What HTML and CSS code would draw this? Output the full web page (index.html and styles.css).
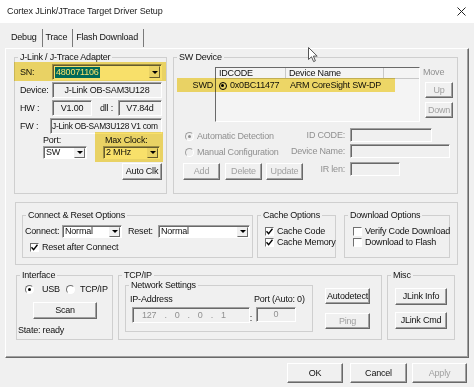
FILE: index.html
```html
<!DOCTYPE html>
<html lang="en">
<head>
    <meta charset="UTF-8">
    <title>Cortex JLink/JTrace Target Driver Setup</title>
    <link rel="stylesheet" href="styles.css">
</head>
<body>
<div class="dlg">
    <div class="titlebar">
        <span class="title">Cortex JLink/JTrace Target Driver Setup</span>
        <svg class="close" width="9" height="9" viewBox="0 0 9 9"><path d="M0.5 0.5L8.5 8.5M8.5 0.5L0.5 8.5" stroke="#222" stroke-width="1"/></svg>
    </div>
    <div class="tabs">
        <span class="tab">Debug</span><span class="tab">Trace</span><span class="tab">Flash Download</span>
    </div>

    <div class="panel">
        <div class="row1">
            <fieldset class="grp adapter">
                <legend>J-Link / J-Trace Adapter</legend>
                <div class="adp">
                    <div class="frow">
                        <span class="lb">SN:</span>
                        <div class="edit white combo grow"><span class="sel">480071106</span><span class="drop"></span></div>
                    </div>
                    <div class="frow">
                        <span class="lb">Device:</span>
                        <div class="edit c grow">J-Link OB-SAM3U128</div>
                    </div>
                    <div class="frow">
                        <span class="lb">HW :</span>
                        <div class="edit c w40">V1.00</div>
                        <span class="dll">dll :</span>
                        <div class="edit c grow">V7.84d</div>
                    </div>
                    <div class="frow">
                        <span class="lb fw">FW :</span>
                        <div class="edit grow fwbox">J-Link OB-SAM3U128 V1 com</div>
                    </div>
                    <div class="clk">
                        <div class="col">
                            <span class="cl">Port:</span>
                            <div class="edit white combo sm w44">SW<span class="drop"></span></div>
                        </div>
                        <div class="col">
                            <span class="cl mc">Max Clock:</span>
                            <div class="edit white combo sm w57">2 MHz<span class="drop"></span></div>
                        </div>
                    </div>
                    <div class="autorow"><button class="btn autoclk">Auto Clk</button></div>
                    <div class="hl hl-sn"></div>
                    <div class="hl hl-clk"></div>
                </div>
            </fieldset>

            <fieldset class="grp swdev">
                <legend>SW Device</legend>
                <div class="swd">
                    <div class="swtop">
                        <div class="swlbl">SWD</div>
                        <div class="list">
                            <div class="lhead"><span class="c1">IDCODE</span><span class="c2">Device Name</span></div>
                            <div class="lrow">
                                <span class="c1"><i class="tgt"></i>0x0BC11477</span>
                                <span class="c2">ARM CoreSight SW-DP</span>
                            </div>
                        </div>
                        <div class="move">
                            <span class="gray">Move</span>
                            <button class="btn dis up">Up</button>
                            <button class="btn dis down">Down</button>
                        </div>
                    </div>
                    <div class="swbot">
                        <div class="swleft">
                            <div class="rrow gray"><i class="radio on dim"></i>Automatic Detection</div>
                            <div class="rrow gray"><i class="radio dim"></i>Manual Configuration</div>
                            <div class="btnrow">
                                <button class="btn dis b37">Add</button>
                                <button class="btn dis b37 ml5">Delete</button>
                                <button class="btn dis b37 ml4">Update</button>
                            </div>
                        </div>
                        <div class="swright">
                            <div class="frow2 h15"><span class="rl gray">ID CODE:</span><div class="edit w82"></div></div>
                            <div class="frow2 mt2"><span class="rl gray">Device Name:</span><div class="edit w100"></div></div>
                            <div class="frow2 mt4"><span class="rl gray">IR len:</span><div class="edit w50"></div></div>
                        </div>
                    </div>
                    <div class="hl hl-swd"></div>
                </div>
            </fieldset>
        </div>

        <div class="bigbox">
            <fieldset class="grp conn">
                <legend>Connect &amp; Reset Options</legend>
                <div class="cro">
                    <div class="crow">
                        <span class="cn">Connect:</span>
                        <div class="edit white combo sm w60">Normal<span class="drop"></span></div>
                        <span class="rs">Reset:</span>
                        <div class="edit white combo sm w92">Normal<span class="drop"></span></div>
                    </div>
                    <div class="chkrow"><i class="chk on"><svg width="7" height="7" viewBox="0 0 7 7"><path d="M0.5 3.3L2.6 5.6L6.5 0.8" fill="none" stroke="#000" stroke-width="1.4"/></svg></i>Reset after Connect</div>
                </div>
            </fieldset>
            <fieldset class="grp cache">
                <legend>Cache Options</legend>
                <div class="chks">
                    <div class="crow2"><i class="chk on"><svg width="7" height="7" viewBox="0 0 7 7"><path d="M0.5 3.3L2.6 5.6L6.5 0.8" fill="none" stroke="#000" stroke-width="1.4"/></svg></i>Cache Code</div>
                    <div class="crow2"><i class="chk on"><svg width="7" height="7" viewBox="0 0 7 7"><path d="M0.5 3.3L2.6 5.6L6.5 0.8" fill="none" stroke="#000" stroke-width="1.4"/></svg></i>Cache Memory</div>
                </div>
            </fieldset>
            <fieldset class="grp dload">
                <legend>Download Options</legend>
                <div class="chks pl8">
                    <div class="crow2"><i class="chk"></i>Verify Code Download</div>
                    <div class="crow2"><i class="chk"></i>Download to Flash</div>
                </div>
            </fieldset>
        </div>

        <div class="row3">
            <fieldset class="grp iface">
                <legend>Interface</legend>
                <div class="irow"><i class="radio on"></i><span class="usb">USB</span><i class="radio ml6"></i><span class="tcp">TCP/IP</span></div>
                <button class="btn scan">Scan</button>
                <div class="state">State: ready</div>
            </fieldset>

            <fieldset class="grp tcpip">
                <legend>TCP/IP</legend>
                <div class="tcp">
                    <fieldset class="grp netset">
                        <legend>Network Settings</legend>
                        <div class="net">
                            <div class="ipcol">
                                <span class="cl">IP-Address</span>
                                <div class="edit ipbox gray"><span>127</span><span>.</span><span>0</span><span>.</span><span>0</span><span>.</span><span>1</span></div>
                            </div>
                            <div class="colon">:</div>
                            <div class="portcol">
                                <span class="cl">Port (Auto: 0)</span>
                                <div class="edit c w40 h15 gray">0</div>
                            </div>
                        </div>
                    </fieldset>
                    <div class="adbtns">
                        <button class="btn w45">Autodetect</button>
                        <button class="btn dis w45 ping">Ping</button>
                    </div>
                </div>
            </fieldset>

            <fieldset class="grp misc">
                <legend>Misc</legend>
                <div class="miscb">
                    <button class="btn w52">JLink Info</button>
                    <button class="btn w52 mt7">JLink Cmd</button>
                </div>
            </fieldset>
        </div>
    </div>

    <div class="footer">
        <button class="btn ok">OK</button>
        <button class="btn cancel">Cancel</button>
        <button class="btn dis apply">Apply</button>
    </div>

    <svg class="cursor" width="11" height="16" viewBox="0 0 11 16"><path d="M0.5 0.5L0.5 12.5L3.5 9.8L5.6 14.6L7.4 13.8L5.4 9.1L9.2 9.1Z" fill="#fff" stroke="#555" stroke-width="1"/></svg>
</div>
</body>
</html>
```

FILE: styles.css
```css
* {
    box-sizing: border-box;
    margin: 0;
    padding: 0;
}
html, body {
    background: #f0f0f0;
}
body {
    width: 474px;
    height: 387px;
    overflow: hidden;
    font: 9px/11px "Liberation Sans", Arial, sans-serif;
    letter-spacing: -0.2px;
    color: #111;
}
.dlg {
    position: relative;
    height: 387px;
}
.titlebar {
    height: 23px;
    background: #fff;
    display: flex;
    align-items: center;
    justify-content: space-between;
    padding: 0 8px 0 7px;
}
.title {
    letter-spacing: -0.1px;
    color: #222;
}
.tabs {
    height: 25px;
    display: flex;
    padding: 6px 0 0 8px;
}
.tab {
    height: 18px;
    line-height: 17px;
    padding: 0 5px 0 3px;
    border-right: 1px solid #7a7a7a;
}
.panel {
    width: 464px;
    height: 310px;
    margin-left: 5px;
    border: 1px solid;
    border-color: #fff #696969 #696969 #fff;
    box-shadow: inset -1px -1px 0 #a0a0a0;
    padding: 3px 0 0 8px;
}

/* group boxes */
.grp {
    border: 1px solid #cfcfcf;
    min-width: 0;
    flex-shrink: 0;
}
legend {
    margin-left: 3px;
    padding: 0 2px;
    line-height: 11px;
}
.gray {
    color: #909090;
}

/* edit boxes, combos, buttons */
.edit {
    height: 16px;
    border: 1px solid;
    border-color: #a0a0a0 #fff #fff #a0a0a0;
    box-shadow: inset 1px 1px 0 #696969;
    background: #f0f0f0;
    display: flex;
    align-items: center;
    padding: 0 2px;
    white-space: nowrap;
    overflow: hidden;
    flex-shrink: 0;
}
.edit.c {
    justify-content: center;
}
.fwbox {
    padding-left: 1px;
    font-size: 8.4px;
    letter-spacing: -0.3px;
}
.white {
    background: #fff;
}
.grow {
    flex: 1;
}
.combo {
    padding: 0 1px 0 2px;
}
.combo.sm {
    height: 13px;
}
.drop {
    margin-left: auto;
    width: 11px;
    height: 12px;
    border: 1px solid;
    border-color: #f0f0f0 #696969 #696969 #f0f0f0;
    background: #f0f0f0;
    display: flex;
    align-items: center;
    justify-content: center;
    flex-shrink: 0;
}
.combo.sm .drop {
    height: 10px;
}
.drop::after {
    content: "";
    border-left: 3px solid transparent;
    border-right: 3px solid transparent;
    border-top: 3px solid #000;
}
.sel {
    background: #0078d7;
    color: #fff;
    padding: 0 1px;
}
.btn {
    font: inherit;
    letter-spacing: inherit;
    color: #111;
    background: #f0f0f0;
    border: 1px solid;
    border-color: #fff #696969 #696969 #fff;
    box-shadow: inset -1px -1px 0 #a0a0a0;
    display: flex;
    align-items: center;
    justify-content: center;
    flex-shrink: 0;
    height: 17px;
}
.btn.dis {
    color: #a0a0a0;
}
.radio {
    display: inline-block;
    width: 9px;
    height: 9px;
    border-radius: 50%;
    border: 1px solid;
    border-color: #707070 #fff #fff #707070;
    background: #fff;
    position: relative;
    flex-shrink: 0;
}
.radio.on::after {
    content: "";
    position: absolute;
    left: 2px;
    top: 2px;
    width: 3px;
    height: 3px;
    border-radius: 50%;
    background: #000;
}
.radio.dim {
    background: #f0f0f0;
    border-color: #a0a0a0 #fff #fff #a0a0a0;
}
.radio.dim.on::after {
    background: #909090;
}
.chk {
    display: inline-flex;
    align-items: center;
    justify-content: center;
    width: 9px;
    height: 9px;
    border: 1px solid;
    border-color: #707070 #fff #fff #707070;
    background: #fff;
    margin-right: 3px;
    flex-shrink: 0;
}

/* adapter */
.row1 {
    display: flex;
    gap: 6px;
}
.adapter {
    width: 153px;
    height: 142px;
}
.adp {
    position: relative;
    padding: 1px 4px 0 5px;
}
.frow {
    display: flex;
    align-items: center;
    height: 16px;
    margin-bottom: 2px;
}
.lb {
    width: 32px;
    flex-shrink: 0;
}
.lb.fw {
    width: 30px;
}
.dll {
    width: 18px;
    margin-left: 8px;
}
.w40 { width: 40px; }
.w44 { width: 44px; }
.w57 { width: 57px; }
.w60 { width: 60px; }
.w92 { width: 92px; }
.w82 { width: 82px; }
.w100 { width: 100px; }
.w50 { width: 50px; }
.w45 { width: 45px; }
.w52 { width: 52px; }
.h15 { height: 15px; }
.clk {
    display: flex;
    gap: 16px;
    margin-top: -1px;
    padding-left: 23px;
}
.clk .col {
    display: flex;
    flex-direction: column;
    gap: 1px;
}
.cl {
    height: 10px;
    line-height: 10px;
}
.cl.mc {
    padding-left: 2px;
}
.autorow {
    display: flex;
    justify-content: flex-end;
    margin-top: 4px;
}
.autoclk {
    width: 40px;
}

/* highlighter marks */
.hl {
    position: absolute;
    background: #f8e06a;
    mix-blend-mode: multiply;
    pointer-events: none;
}
.hl-sn {
    left: -1px;
    top: -1px;
    width: 152px;
    height: 19px;
}
.hl-clk {
    left: 80px;
    top: 69px;
    width: 68px;
    height: 30px;
}
.hl-swd {
    left: 3px;
    top: 15px;
    width: 218px;
    height: 14px;
}

/* sw device */
.swdev {
    width: 285px;
    height: 142px;
}
.swd {
    position: relative;
    padding-top: 4px;
}
.swtop {
    display: flex;
}
.swlbl {
    width: 41px;
    padding: 13px 2px 0 0;
    text-align: right;
}
.list {
    width: 205px;
    height: 55px;
    border: 1px solid;
    border-color: #696969 #fff #fff #696969;
    background: #f4f4f4;
}
.lhead {
    display: flex;
    height: 11px;
    border-bottom: 1px solid #c8c8c8;
}
.lhead span {
    border-right: 1px solid #c8c8c8;
    padding-left: 3px;
    line-height: 10px;
}
.c1 {
    width: 70px;
    display: flex;
    align-items: center;
}
.c2 {
    width: 98px;
    padding-left: 4px;
}
.lrow {
    display: flex;
    align-items: center;
    height: 13px;
}
.tgt {
    width: 8px;
    height: 8px;
    border: 1.5px solid #000;
    border-radius: 50%;
    margin: 0 3px 0 3px;
    position: relative;
}
.tgt::after {
    content: "";
    position: absolute;
    left: 1px;
    top: 1px;
    width: 3px;
    height: 3px;
    border-radius: 50%;
    background: #000;
}
.move {
    margin-left: 3px;
    width: 32px;
    display: flex;
    flex-direction: column;
    align-items: flex-start;
}
.move span {
    height: 10px;
    line-height: 10px;
}
.move .up {
    width: 28px;
    height: 16px;
    margin: 5px 0 0 2px;
}
.move .down {
    width: 28px;
    height: 16px;
    margin: 4px 0 0 2px;
}
.swbot {
    display: flex;
    margin-top: 6px;
    padding-left: 9px;
}
.swleft {
    width: 105px;
    flex-shrink: 0;
}
.rrow {
    display: flex;
    align-items: center;
    gap: 3px;
    height: 16px;
    padding-left: 2px;
    white-space: nowrap;
}
.btnrow {
    display: flex;
    margin-top: 3px;
}
.b37 {
    width: 37px;
}
.ml5 { margin-left: 5px; }
.ml4 { margin-left: 4px; }
.ml6 { margin-left: 6px; }
.mt2 { margin-top: 2px; }
.mt4 { margin-top: 4px; }
.mt7 { margin-top: 7px; }
.frow2 {
    display: flex;
    align-items: center;
    height: 14px;
}
.frow2 .edit {
    height: 100%;
    margin-left: 5px;
}
.rl {
    width: 57px;
    text-align: right;
    white-space: nowrap;
}

/* connect / cache / download */
.bigbox {
    margin: 8px 0 0 1px;
    width: 443px;
    height: 63px;
    border: 1px solid #cfcfcf;
    display: flex;
    align-items: flex-start;
    padding: 7px 0 0 6px;
}
.conn {
    width: 231px;
    height: 48px;
}
.cro {
    padding: 4px 0 0 2px;
}
.crow {
    display: flex;
    align-items: center;
    height: 13px;
}
.cn {
    width: 37px;
}
.rs {
    width: 30px;
    margin-left: 6px;
}
.chkrow {
    display: flex;
    align-items: center;
    height: 12px;
    margin-top: 3px;
    padding-left: 5px;
}
.cache {
    width: 79px;
    height: 48px;
    margin-left: 4px;
}
.dload {
    width: 106px;
    height: 48px;
    margin-left: 8px;
}
.chks {
    padding: 5px 0 0 7px;
}
.chks.pl8 {
    padding-left: 8px;
}
.crow2 {
    display: flex;
    align-items: center;
    height: 11px;
    white-space: nowrap;
}

/* interface / tcp / misc */
.row3 {
    display: flex;
    margin-top: 5px;
    padding-left: 2px;
}
.iface {
    width: 97px;
    height: 70px;
}
.irow {
    display: flex;
    align-items: center;
    height: 12px;
    margin-top: 2px;
    padding-left: 8px;
}
.usb {
    margin-left: 8px;
}
.tcp {
    margin-left: 5px;
}
.scan {
    width: 64px;
    margin: 7px 0 0 16px;
}
.state {
    margin-top: 6px;
    padding-left: 1px;
}
.tcpip {
    width: 264px;
    height: 70px;
    margin-left: 5px;
}
.tcpip .tcp {
    display: flex;
    margin: -1px 0 0 0;
    padding-left: 6px;
}
.netset {
    width: 188px;
    height: 52px;
}
.net {
    display: flex;
    padding-top: 3px;
}
.ipcol {
    width: 122px;
    padding-left: 4px;
    display: flex;
    flex-direction: column;
}
.ipbox {
    width: 118px;
    margin: 3px 0 0 2px;
    gap: 8px;
    padding-left: 9px;
}
.colon {
    width: 6px;
    margin-top: 16px;
    line-height: 16px;
    text-align: center;
}
.portcol {
    display: flex;
    flex-direction: column;
}
.portcol .cl {
    margin-left: 0;
    white-space: nowrap;
}
.portcol .edit {
    margin: 3px 0 0 2px;
}
.adbtns {
    margin-left: 12px;
    padding-top: 8px;
    display: flex;
    flex-direction: column;
}
.adbtns .btn {
    height: 16px;
}
.adbtns .ping {
    margin-top: 9px;
}
.misc {
    width: 68px;
    height: 70px;
    margin-left: 5px;
}
.miscb {
    padding: 7px 0 0 7px;
}

/* footer */
.footer {
    display: flex;
    justify-content: flex-end;
    margin-top: 5px;
    padding-right: 7px;
}
.footer .btn {
    height: 20px;
}
.ok { width: 56px; }
.cancel { width: 57px; margin-left: 7px; }
.apply { width: 55px; margin-left: 5px; }

.cursor {
    position: absolute;
    left: 308px;
    top: 47px;
}
```
